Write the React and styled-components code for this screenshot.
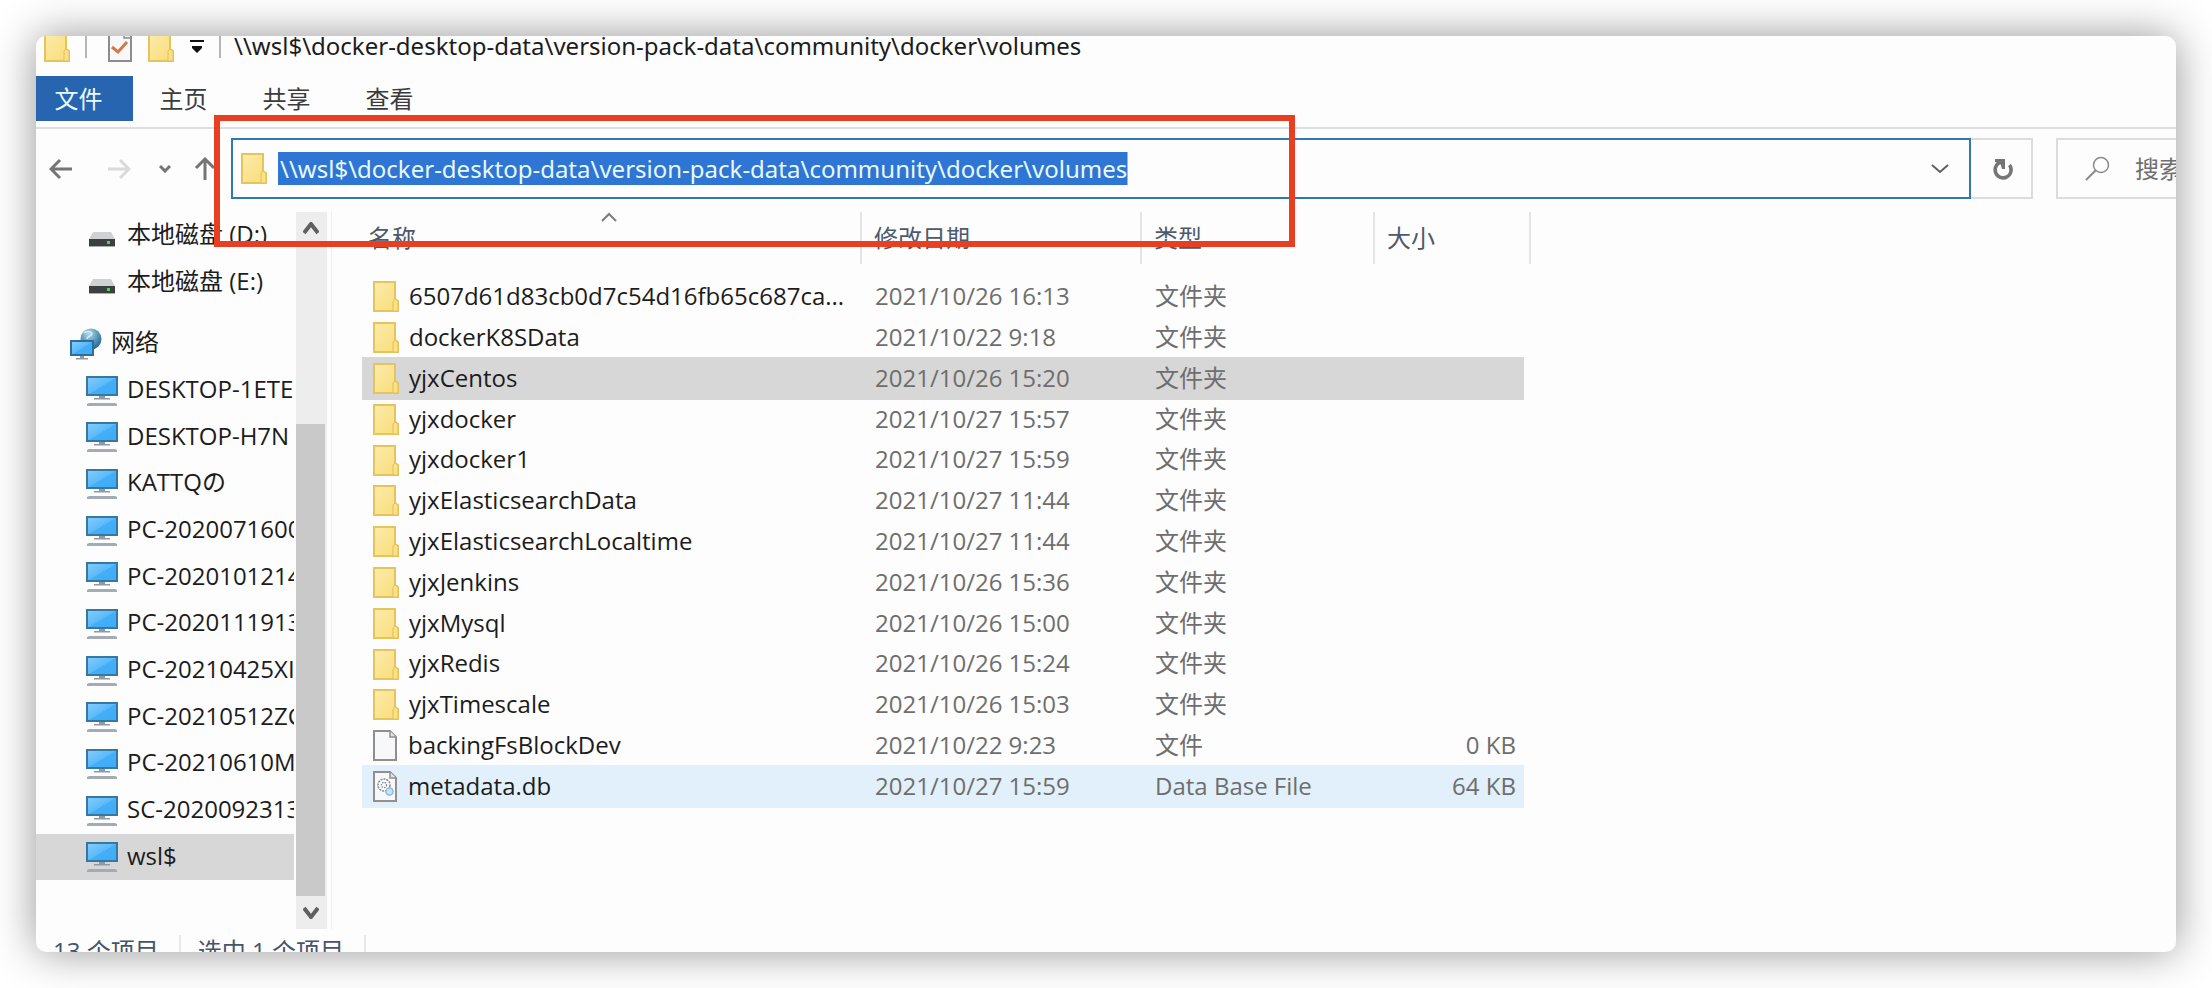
import React, { useState } from 'react'
import styled, { createGlobalStyle } from 'styled-components'

const PATH = '\\\\wsl$\\docker-desktop-data\\version-pack-data\\community\\docker\\volumes'

const tabs = ['主页', '共享', '查看']

const disks = ['本地磁盘 (D:)', '本地磁盘 (E:)']

const computers = [
  'DESKTOP-1ETE',
  'DESKTOP-H7N',
  'KATTQの',
  'PC-2020071600',
  'PC-2020101214',
  'PC-2020111913',
  'PC-20210425XI',
  'PC-20210512ZC',
  'PC-20210610M',
  'SC-2020092313',
  'wsl$'
]

const files = [
  { name: '6507d61d83cb0d7c54d16fb65c687ca...', date: '2021/10/26 16:13', type: '文件夹', icon: 'folder' },
  { name: 'dockerK8SData', date: '2021/10/22 9:18', type: '文件夹', icon: 'folder' },
  { name: 'yjxCentos', date: '2021/10/26 15:20', type: '文件夹', icon: 'folder', state: 'selected' },
  { name: 'yjxdocker', date: '2021/10/27 15:57', type: '文件夹', icon: 'folder' },
  { name: 'yjxdocker1', date: '2021/10/27 15:59', type: '文件夹', icon: 'folder' },
  { name: 'yjxElasticsearchData', date: '2021/10/27 11:44', type: '文件夹', icon: 'folder' },
  { name: 'yjxElasticsearchLocaltime', date: '2021/10/27 11:44', type: '文件夹', icon: 'folder' },
  { name: 'yjxJenkins', date: '2021/10/26 15:36', type: '文件夹', icon: 'folder' },
  { name: 'yjxMysql', date: '2021/10/26 15:00', type: '文件夹', icon: 'folder' },
  { name: 'yjxRedis', date: '2021/10/26 15:24', type: '文件夹', icon: 'folder' },
  { name: 'yjxTimescale', date: '2021/10/26 15:03', type: '文件夹', icon: 'folder' },
  { name: 'backingFsBlockDev', date: '2021/10/22 9:23', type: '文件', size: '0 KB', icon: 'file' },
  { name: 'metadata.db', date: '2021/10/27 15:59', type: 'Data Base File', size: '64 KB', icon: 'db', state: 'hover' }
]

const rowColors = { selected: '#d7d7d7', hover: '#e2f0fb' }

const FolderIcon = () => <svg width='26' height='31' viewBox='0 0 26 31' aria-hidden='true'>
  <defs>
    <linearGradient id='folder' x1='0' y1='0' x2='1' y2='1'>
      <stop offset='0' stopColor='#fcebab' />
      <stop offset='1' stopColor='#f9dd78' />
    </linearGradient>
  </defs>
  <path d='M1 1h21v17l3 2v10H1z' fill='url(#folder)' stroke='#e6c45c' strokeWidth='2' />
  <path d='M20 30V20l2-2 3 2v10z' fill='#fbe08a' stroke='#e3bf55' strokeWidth='1' />
</svg>

const FileIcon = ({ db = false }) => <svg width='25' height='31' viewBox='0 0 25 31' aria-hidden='true'>
  <path d='M1 1h16l6 6v23H1z' fill='#f7f8f9' stroke='#8f8f8f' strokeWidth='2' />
  <path d='M17 1v6h6' fill='#e4e4e4' stroke='#8f8f8f' strokeWidth='1.5' />
  {db && <g>
    <circle cx='11' cy='14' r='6' fill='#fff' stroke='#7f8a92' strokeWidth='1.6' strokeDasharray='2 1' />
    <circle cx='11' cy='14' r='2.6' fill='none' stroke='#7f8a92' strokeWidth='1.4' strokeDasharray='1.5 1' />
    <circle cx='16.5' cy='20.5' r='3.6' fill='#c4e2f3' stroke='#86b6d2' strokeWidth='1.4' />
  </g>}
</svg>

const CheckDocIcon = () => <svg width='24' height='31' viewBox='0 0 24 31' aria-hidden='true'>
  <path d='M1 1h22v29H1z' fill='#f8f8f9' stroke='#8a8c90' strokeWidth='2' />
  <path d='M16 1v6h7' fill='#ececec' stroke='#8a8c90' strokeWidth='1.5' />
  <path d='M4 16l6 5 9-10' fill='none' stroke='#d2784a' strokeWidth='3' />
</svg>

const DiskIcon = () => <svg width='28' height='25' viewBox='0 -8 28 25' aria-hidden='true'>
  <path d='M5 1h18l4 7H1z' fill='#cfd1d3' />
  <rect x='1' y='8' width='26' height='7' fill='#3c3f40' />
  <rect x='1' y='15' width='26' height='1' fill='#a9abac' />
  <rect x='19' y='10' width='3' height='3' fill='#3fdc4e' />
</svg>

const ComputerIcon = () => <svg width='32' height='30' viewBox='0 0 32 30' aria-hidden='true'>
  <defs>
    <linearGradient id='screen' x1='0' y1='0' x2='1' y2='1'>
      <stop offset='0' stopColor='#86cdfc' />
      <stop offset='0.5' stopColor='#5bbafa' />
      <stop offset='0.51' stopColor='#44aef8' />
      <stop offset='1' stopColor='#3fabf6' />
    </linearGradient>
  </defs>
  <rect x='1' y='1' width='30' height='18' fill='url(#screen)' stroke='#36789f' strokeWidth='2' />
  <path d='M13 20h6v2h5v1.5H8V22h5z' fill='#8e9aa5' />
  <path d='M3 27h26l2 1v2H1v-2z' fill='#a3abb4' />
</svg>

const NetworkIcon = () => <svg width='32' height='32' viewBox='0 0 32 32' aria-hidden='true'>
  <defs>
    <radialGradient id='globe' cx='0.4' cy='0.25' r='0.8'>
      <stop offset='0' stopColor='#b9dbea' />
      <stop offset='0.5' stopColor='#5d9dbf' />
      <stop offset='1' stopColor='#215f86' />
    </radialGradient>
  </defs>
  <circle cx='21' cy='11' r='10.5' fill='url(#globe)' />
  <path d='M14 5c4-3 8-1 8 1s-5 2-5 5' fill='none' stroke='#d9eef6' strokeWidth='1.5' />
  <rect x='1' y='13' width='22' height='14' fill='url(#screen)' stroke='#2f6f97' strokeWidth='2' />
  <path d='M10 28h4v2h4v1.5H6V30h4z' fill='#8e9aa5' />
</svg>

const ArrowIcon = ({ turn = 0 }) => <svg width='24' height='24' viewBox='0 0 24 24' aria-hidden='true'>
  <path d='M23 12H2M11 3L2 12l9 9' transform={`rotate(${turn} 12 12)`} fill='none' stroke='currentColor' strokeWidth='3' />
</svg>

const ChevronIcon = ({ width = 18, height = 11, weight = 2, up = false }) => <svg width={width} height={height} viewBox={`0 0 ${width} ${height}`} aria-hidden='true'>
  <path
    d={up ? `M1 ${height - 2}L${width / 2} 2L${width - 1} ${height - 2}` : `M1 2L${width / 2} ${height - 2}L${width - 1} 2`}
    fill='none'
    stroke='currentColor'
    strokeWidth={weight}
  />
</svg>

const MoreIcon = () => <svg width='14' height='13' viewBox='0 0 14 13' aria-hidden='true'>
  <path d='M0 0h14v2H0zM2 6h10v2l-5 5-5-5z' fill='#111' />
</svg>

const RefreshIcon = () => <svg width='22' height='24' viewBox='0 0 22 24' aria-hidden='true'>
  <path d='M17.5 8a8 8 0 1 1-8-3' fill='none' stroke='#757575' strokeWidth='3.5' />
  <path d='M3 2h10v10h-3L8.500 7 3 5z' fill='#757575' />
</svg>

const SearchIcon = () => <svg width='25' height='25' viewBox='0 0 25 25' aria-hidden='true'>
  <circle cx='16' cy='9' r='7.5' fill='none' stroke='#8a8a8a' strokeWidth='1.5' />
  <path d='M10.5 14.5L1 24' stroke='#8a8a8a' strokeWidth='2' />
</svg>

const icons = { folder: <FolderIcon />, file: <FileIcon />, db: <FileIcon db /> }

const App = () => {
  const [path, setPath] = useState(PATH)

  return <Desktop>
    <GlobalStyle />
    <Window>
      <TitleBar>
        <TitleButton aria-label='系统菜单'><FolderIcon /></TitleButton>
        <TitleDivider />
        <TitleButton aria-label='属性'><CheckDocIcon /></TitleButton>
        <TitleButton aria-label='新建文件夹'><FolderIcon /></TitleButton>
        <TitleButton aria-label='自定义快速访问工具栏'><MoreIcon /></TitleButton>
        <TitleDivider />
        <Title>{PATH}</Title>
      </TitleBar>
      <Ribbon>
        <Tab $primary>文件</Tab>
        {tabs.map(tab => <Tab key={tab}>{tab}</Tab>)}
      </Ribbon>
      <NavBar>
        <NavButtons>
          <NavButton aria-label='后退'><ArrowIcon /></NavButton>
          <NavButton aria-label='前进' disabled><ArrowIcon turn={180} /></NavButton>
          <NavButton aria-label='最近浏览的位置'><ChevronIcon width={12} height={9} weight={3} /></NavButton>
          <NavButton aria-label='向上'><ArrowIcon turn={90} /></NavButton>
        </NavButtons>
        <Address>
          <FolderIcon />
          <AddressInput aria-label='地址' spellCheck='false' value={path} onChange={e => setPath(e.target.value)} />
          <AddressToggle aria-label='以前的位置'><ChevronIcon /></AddressToggle>
        </Address>
        <Refresh aria-label='刷新'><RefreshIcon /></Refresh>
        <Search>
          <SearchIcon />
          <SearchInput type='search' aria-label='搜索' placeholder='搜索' />
        </Search>
        <Highlight />
      </NavBar>
      <Content>
        <Sidebar>
          <Tree>
            {disks.map(name => <TreeItem key={name} href='#'><TreeIcon><DiskIcon /></TreeIcon><TreeLabel>{name}</TreeLabel></TreeItem>)}
          </Tree>
          <Tree>
            <TreeItem href='#' $root><NetworkIcon /><TreeLabel>网络</TreeLabel></TreeItem>
            {computers.map(name => <TreeItem key={name} href='#' $active={name === 'wsl$'}>
              <TreeIcon><ComputerIcon /></TreeIcon><TreeLabel>{name}</TreeLabel>
            </TreeItem>)}
          </Tree>
        </Sidebar>
        <ScrollBar>
          <ScrollButton aria-label='向上滚动'><ChevronIcon width={16} height={13} weight={4} up /></ScrollButton>
          <ScrollThumb />
          <ScrollButton aria-label='向下滚动'><ChevronIcon width={16} height={13} weight={4} /></ScrollButton>
        </ScrollBar>
        <Listing>
          <Table>
            <colgroup>
              <col width='500' />
              <col width='280' />
              <col width='233' />
              <col width='149' />
              <col width='7' />
            </colgroup>
            <thead>
              <tr>
                <HeadCell $first>名称<SortMark><ChevronIcon width={16} height={11} up /></SortMark></HeadCell>
                <HeadCell>修改日期</HeadCell>
                <HeadCell>类型</HeadCell>
                <HeadCell colSpan={2}>大小</HeadCell>
              </tr>
            </thead>
            <tbody>
              {files.map(file => <Row key={file.name} $color={rowColors[file.state]}>
                <td><FileName>{icons[file.icon]}<span>{file.name}</span></FileName></td>
                <td>{file.date}</td>
                <td>{file.type}</td>
                <SizeCell>{file.size}</SizeCell>
              </Row>)}
            </tbody>
          </Table>
        </Listing>
      </Content>
      <StatusBar>
        <StatusItem>13 个项目</StatusItem>
        <StatusItem>选中 1 个项目</StatusItem>
      </StatusBar>
    </Window>
  </Desktop>
}

export default App

const GlobalStyle = createGlobalStyle`
  * {
    box-sizing: border-box;
  }
  body {
    margin: 0;
    background: #fff;
  }
  body, button, input {
    font-family: 'Open Sans', 'Noto Sans CJK SC', sans-serif;
    font-size: 24px;
    line-height: 32px;
  }
  button {
    padding: 0;
    border: none;
    background: none;
    color: inherit;
  }
  svg {
    display: block;
    flex: none;
  }
`

const Desktop = styled.div`
  height: 100vh;
  padding: 36px;
`

const Window = styled.main`
  display: flex;
  flex-direction: column;
  height: 100%;
  overflow: hidden;
  background: #fdfdfd;
  border-radius: 10px;
  box-shadow: 0 0 44px rgba(0,0,0,0.42);
  color: #1c1c1c;
`

const TitleBar = styled.header`
  display: flex;
  flex: none;
  align-items: center;
  height: 60px;
  margin-top: -20px;
`

const TitleDivider = styled.span`
  width: 2px;
  height: 24px;
  margin: 0 13px 0 7px;
  background: #b5b5b5;
`

const TitleButton = styled.button`
  margin: 0 8px;
`

const Title = styled.h1`
  margin: 0;
  font-family: 'Noto Sans', 'Noto Sans CJK SC', sans-serif;
  font-size: 24px;
  font-weight: 400;
  white-space: nowrap;
`

const Ribbon = styled.nav`
  display: flex;
  flex: none;
  height: 53px;
  padding-bottom: 6px;
  border-bottom: 2px solid #dedede;
`

const Tab = styled.button`
  width: 103px;
  padding-right: 2px;
  color: #3b3b3b;
  ${props => props.$primary && `
    width: 97px;
    padding-right: 12px;
    background: #2765b0;
    color: #e9fbff;
  `}
`

const NavBar = styled.div`
  position: relative;
  display: flex;
  flex: none;
  align-items: stretch;
  height: 61px;
  margin: 9px 0 13px;
`

const NavButtons = styled.div`
  display: flex;
  align-items: center;
  width: 195px;
  padding-left: 13px;
`

const NavButton = styled.button`
  margin-right: 22px;
  color: #757575;
  &:first-child {
    margin-right: 34px;
  }
  &:disabled {
    margin-right: 28px;
    color: #dadada;
  }
  &:last-child {
    margin-right: 0;
  }
`

const Address = styled.div`
  display: flex;
  flex: 1;
  align-items: center;
  min-width: 0;
  padding: 0 20px 0 8px;
  border: 2px solid #2f79ae;
`

const AddressInput = styled.input`
  field-sizing: content;
  height: 33px;
  margin-left: 11px;
  padding: 0 0 0 2px;
  border: none;
  border-right: 1px solid #eba75c;
  outline: none;
  background: #2e75d4;
  color: #e6f9ff;
  font-family: 'Noto Sans', 'Noto Sans CJK SC', sans-serif;
`

const AddressToggle = styled.button`
  margin-left: auto;
  color: #5f5f5f;
`

const Refresh = styled.button`
  display: flex;
  align-items: center;
  justify-content: center;
  width: 62px;
  padding-left: 4px;
  border: 2px solid #dcdcdc;
  border-left: none;
`

const Search = styled.label`
  display: flex;
  align-items: center;
  width: 160px;
  margin: 0 -40px 0 23px;
  padding-left: 27px;
  border: 2px solid #dcdcdc;
`

const SearchInput = styled.input`
  width: 100px;
  margin-left: 25px;
  padding: 0;
  border: none;
  outline: none;
  background: none;
  &::placeholder {
    color: #707070;
  }
`

/* frame drawn over the address and the column headings */
const Highlight = styled.div`
  position: absolute;
  z-index: 1;
  top: -23px;
  left: 178px;
  width: 1081px;
  height: 132px;
  border: 6px solid #e83e22;
  pointer-events: none;
`

const Content = styled.div`
  display: flex;
  flex: 1;
  min-height: 0;
`

const Sidebar = styled.aside`
  width: 258px;
  overflow: hidden;
`

const Tree = styled.nav`
  margin-bottom: 14px;
`

const TreeItem = styled.a`
  display: flex;
  align-items: center;
  height: 47px;
  padding-left: ${props => props.$root ? 34 : 50}px;
  gap: 9px;
  background: ${props => props.$active ? '#d7d7d7' : 'none'};
  color: #1c1c1c;
  text-decoration: none;
  white-space: nowrap;
  &:nth-child(3n) {
    height: 46px;
  }
`

const TreeIcon = styled.span`
  display: flex;
  justify-content: center;
  width: 32px;
`

const TreeLabel = styled.span`
  padding-bottom: 3px;
`

const ScrollBar = styled.div`
  display: flex;
  flex-direction: column;
  width: 31px;
  margin-left: 2px;
  background: #ededed;
`

const ScrollButton = styled.button`
  display: flex;
  flex: none;
  align-items: center;
  justify-content: center;
  height: 33px;
  padding-right: 2px;
  color: #606060;
`

const ScrollThumb = styled.div`
  height: 472px;
  margin: auto 2px 0 0;
  background: #c9c9c9;
`

const Listing = styled.section`
  flex: 1;
  min-width: 0;
  margin-left: 4px;
  padding-left: 30px;
  border-left: 1px solid #f0f0f0;
`

const Table = styled.table`
  table-layout: fixed;
  width: 1169px;
  border-spacing: 0;
  tbody::before {
    content: '';
    display: block;
    height: 12px;
  }
  td {
    padding: 0 0 2px 13px;
    color: #6e6e6e;
    white-space: nowrap;
  }
  td:first-child {
    padding: 0 0 0 11px;
  }
`

const HeadCell = styled.th`
  position: relative;
  height: 52px;
  padding: 0 0 0 ${props => props.$first ? 6 : 12}px;
  border-right: 2px solid #e4e4e4;
  color: #4c5a6b;
  font-weight: 400;
  text-align: left;
`

const SortMark = styled.span`
  position: absolute;
  top: 0;
  left: 48%;
  color: #7d7d7d;
`

const Row = styled.tr`
  height: 41px;
  &:nth-child(5n) {
    height: 40px;
  }
  ${props => props.$color && `
    td {
      background: ${props.$color};
      box-shadow: 0 1px 0 ${props.$color}, 0 -1px 0 ${props.$color};
    }
  `}
`

const FileName = styled.span`
  display: flex;
  align-items: center;
  gap: 10px;
  color: #1c1c1c;
  span {
    padding-bottom: 2px;
  }
`

const SizeCell = styled.td`
  && {
    padding-right: 8px;
    text-align: right;
  }
`

const StatusBar = styled.footer`
  display: flex;
  flex: none;
  align-items: center;
  height: 44px;
  margin-bottom: -21px;
  color: #44546a;
`

const StatusItem = styled.span`
  padding: 0 20px 0 17px;
  border-right: 2px solid #e8e8e8;
`
